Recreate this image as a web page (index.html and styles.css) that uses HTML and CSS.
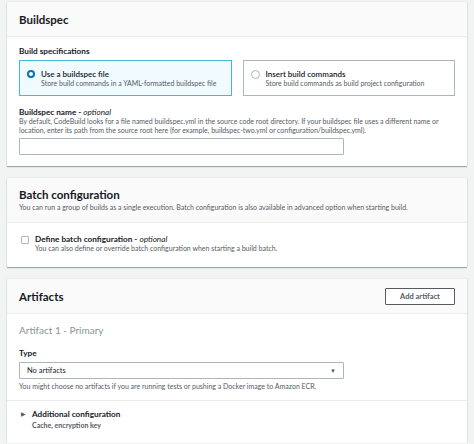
FILE: index.html
```html
<!DOCTYPE html>
<html lang="en">
<head>
    <meta charset="UTF-8">
    <title>Create build project</title>
    <link rel="stylesheet" href="styles.css">
</head>
<body>
    <div class="page">
        <div class="card">
            <div class="card-header">
                <h2>Buildspec</h2>
            </div>
            <div class="card-body">
                <div class="label">Build specifications</div>
                <div class="tiles">
                    <div class="tile selected">
                        <span class="radio checked"></span>
                        <div>
                            <div class="tile-title">Use a buildspec file</div>
                            <div class="desc">Store build commands in a YAML-formatted buildspec file</div>
                        </div>
                    </div>
                    <div class="tile">
                        <span class="radio"></span>
                        <div>
                            <div class="tile-title">Insert build commands</div>
                            <div class="desc">Store build commands as build project configuration</div>
                        </div>
                    </div>
                </div>
                <div class="field">
                    <div class="label">Buildspec name - <i>optional</i></div>
                    <div class="desc">By default, CodeBuild looks for a file named buildspec.yml in the source code root directory. If your buildspec file uses a different name or location, enter its path from the source root here (for example, buildspec-two.yml or configuration/buildspec.yml).</div>
                    <div class="input"></div>
                </div>
            </div>
        </div>

        <div class="card">
            <div class="card-header tall">
                <h2>Batch configuration</h2>
                <div class="desc">You can run a group of builds as a single execution. Batch configuration is also available in advanced option when starting build.</div>
            </div>
            <div class="card-body">
                <div class="check-row">
                    <span class="checkbox"></span>
                    <div>
                        <div class="label">Define batch configuration - <i>optional</i></div>
                        <div class="desc">You can also define or override batch configuration when starting a build batch.</div>
                    </div>
                </div>
            </div>
        </div>

        <div class="card">
            <div class="card-header split">
                <h2>Artifacts</h2>
                <button class="button">Add artifact</button>
            </div>
            <div class="card-body artifact">
                <div class="sub-title">Artifact 1 - Primary</div>
                <div class="label">Type</div>
                <div class="select">
                    <span>No artifacts</span>
                    <span class="caret">&#9660;</span>
                </div>
                <div class="desc">You might choose no artifacts if you are running tests or pushing a Docker image to Amazon ECR.</div>
            </div>
            <div class="expander">
                <span class="arrow">&#9654;</span>
                <div>
                    <div class="label">Additional configuration</div>
                    <div class="desc strong">Cache, encryption key</div>
                </div>
            </div>
        </div>
    </div>
</body>
</html>
```

FILE: styles.css
```css
body {
    margin: 0;
    background: #f2f3f3;
    font-family: Lato, "Open Sans", sans-serif;
    color: #16191f;
}
.page {
    padding: 1px 7px 0 7px;
    display: flex;
    flex-direction: column;
    gap: 11px;
}
.card {
    background: #ffffff;
    border-top: 1px solid #eaeded;
    box-shadow: 0 1px 1px rgba(0,28,36,0.3), 1px 1px 1px -1px rgba(0,28,36,0.2), -1px 1px 1px -1px rgba(0,28,36,0.2);
}
.card-header {
    background: #fafafa;
    border-bottom: 1px solid #eaeded;
    height: 35px;
    padding: 0 12px;
    display: flex;
    flex-direction: column;
    justify-content: center;
    box-sizing: border-box;
}
.card-header.tall {
    height: 45px;
    gap: 2px;
}
.card-header.split {
    flex-direction: row;
    align-items: center;
    justify-content: space-between;
    height: 35px;
}
h2 {
    margin: 0;
    font-size: 11.5px;
    font-weight: bold;
}
.card-body {
    padding: 9px 12px 11px 12px;
}
.card-body.artifact {
    padding-top: 10px;
    padding-bottom: 9px;
}
.label {
    font-size: 8.2px;
    font-weight: bold;
    line-height: 10px;
}
.label i {
    font-weight: normal;
}
.desc {
    font-size: 7px;
    color: #545b64;
    line-height: 9px;
}
.desc.strong {
    font-weight: bold;
    color: #545b64;
    margin-top: 2px;
}
.tiles {
    display: grid;
    grid-template-columns: 1fr 1fr;
    gap: 11px;
    margin-top: 4px;
}
.tile {
    border: 1px solid #aab7b8;
    height: 36px;
    box-sizing: border-box;
    display: flex;
    align-items: center;
    gap: 6px;
    padding: 0 7px;
}
.tile.selected {
    border-color: #44b9d6;
    background: #f1faff;
}
.tile-title {
    font-size: 8px;
    font-weight: 600;
    line-height: 10px;
}
.radio {
    width: 7px;
    height: 7px;
    border: 1px solid #aab7b8;
    border-radius: 50%;
    background: #ffffff;
    flex-shrink: 0;
    margin-top: -8px;
}
.radio.checked {
    border: 2.5px solid #0073bb;
    width: 4px;
    height: 4px;
}
.field {
    margin-top: 11px;
}
.input {
    width: 325px;
    height: 17px;
    box-sizing: border-box;
    border: 1px solid #aab7b8;
    border-radius: 1px;
    margin-top: 3px;
}
.check-row {
    display: flex;
    gap: 6px;
    padding: 2px 0 3px 2px;
}
.checkbox {
    width: 6px;
    height: 6px;
    border: 1px solid #aab7b8;
    border-radius: 1px;
    margin-top: 2px;
    flex-shrink: 0;
}
.button {
    font-family: inherit;
    font-size: 7.5px;
    font-weight: bold;
    color: #545b64;
    background: #ffffff;
    border: 1px solid #545b64;
    border-radius: 1px;
    width: 70px;
    height: 17px;
    padding: 0;
}
.sub-title {
    font-size: 10px;
    color: #879596;
    margin: 0 0 12px 0;
}
.select {
    width: 325px;
    height: 17px;
    box-sizing: border-box;
    border: 1px solid #aab7b8;
    border-radius: 1px;
    margin: 4px 0 3px 0;
    display: flex;
    align-items: center;
    justify-content: space-between;
    padding: 0 7px;
    font-size: 7.5px;
}
.caret {
    font-size: 6px;
    color: #545b64;
}
.expander {
    border-top: 1px solid #eaeded;
    display: flex;
    gap: 6px;
    padding: 8px 12px 13px 14px;
}
.arrow {
    font-size: 6px;
    line-height: 10px;
    color: #545b64;
}
```
